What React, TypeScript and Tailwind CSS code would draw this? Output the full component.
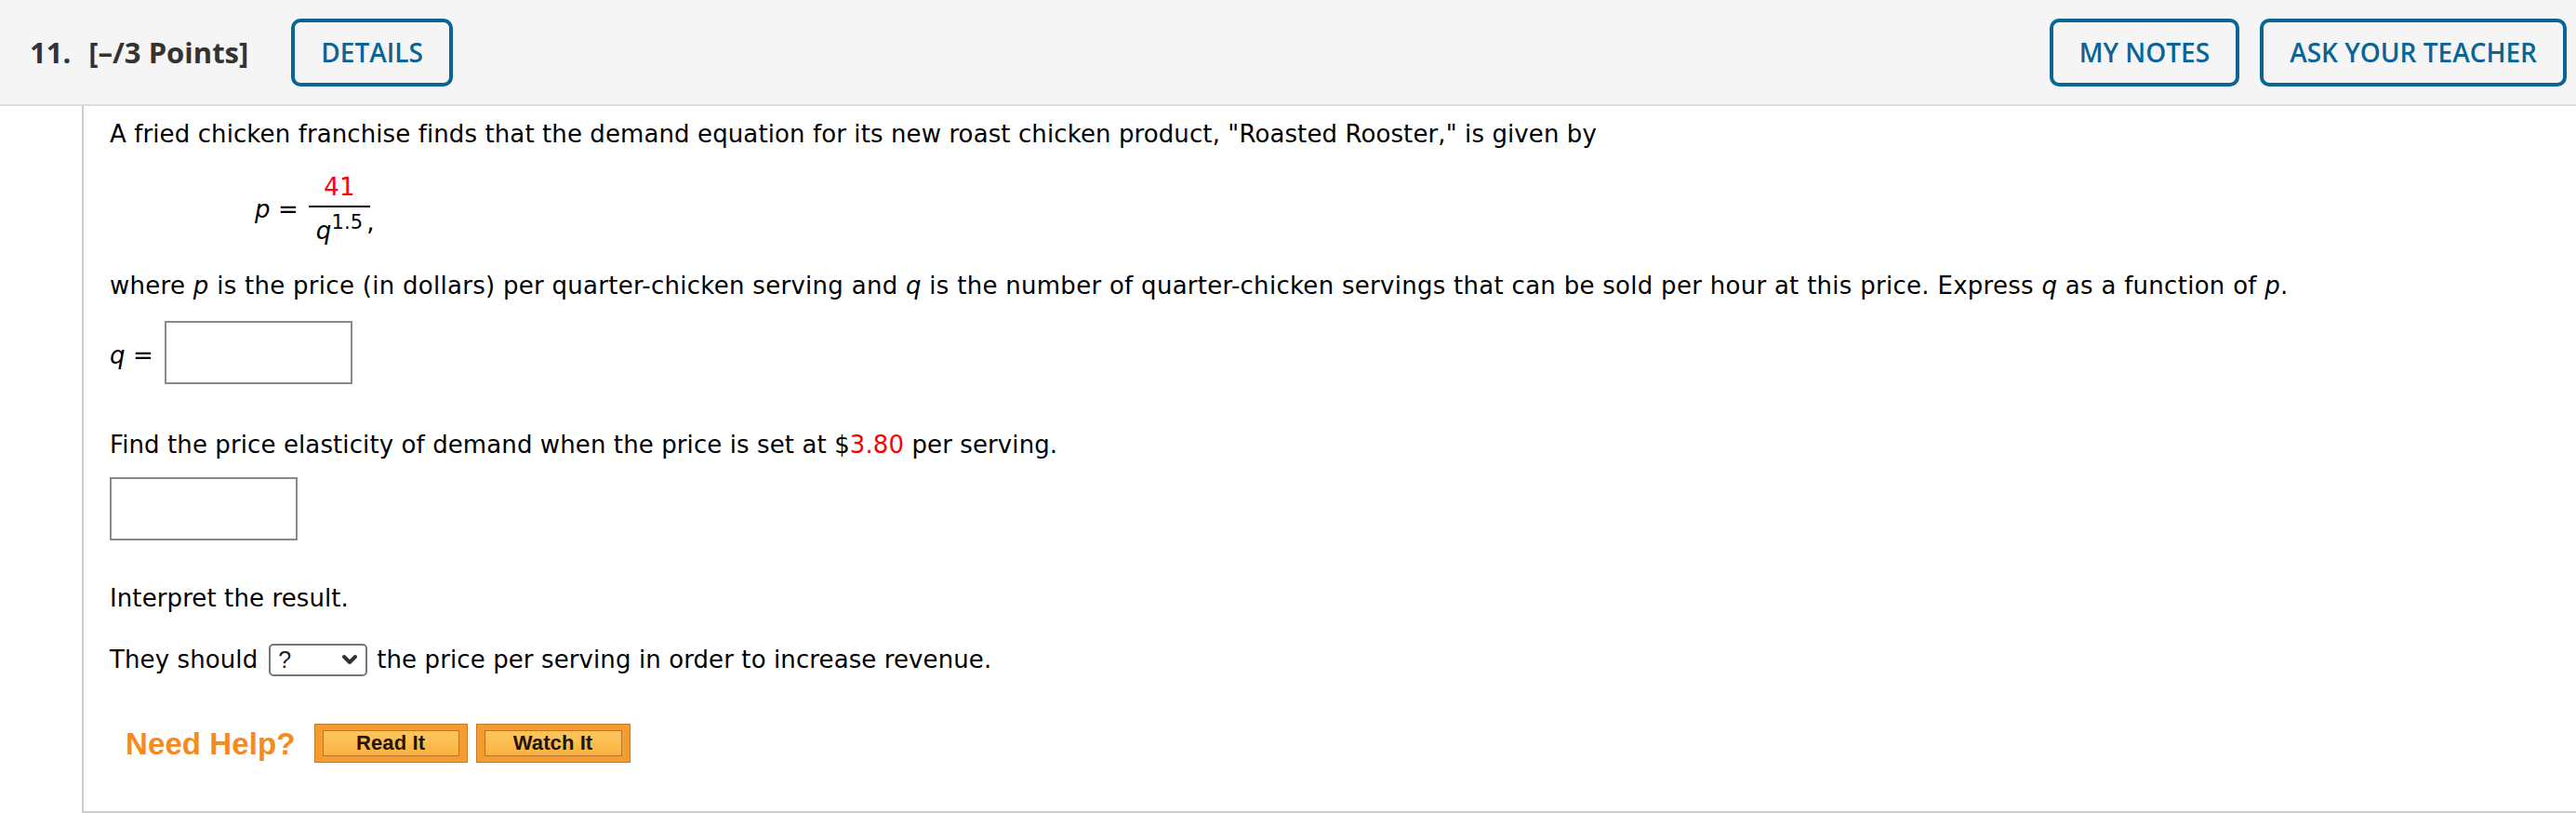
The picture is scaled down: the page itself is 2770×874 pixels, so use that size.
import { ChevronDown } from "lucide-react";

function OutlineButton({ label }: { label: string }) {
  return (
    <button className="h-[73px] rounded-[10px] border-4 border-[#0a6496] bg-transparent px-[28px] font-['Open_Sans'] text-[28px] font-semibold text-[#0a6496]">
      {label}
    </button>
  );
}

function HelpButton({ label, width }: { label: string; width: string }) {
  return (
    <div className={`flex h-[42px] ${width} border border-[#c8772c] bg-[#f59c30] px-[8px] py-[6px]`}>
      <div className="flex flex-1 items-center justify-center border border-[#b77532] bg-gradient-to-b from-[#ffc65e] to-[#fbb240] font-['Liberation_Sans'] text-[22px] font-bold text-[#1e1508]">
        {label}
      </div>
    </div>
  );
}

function AnswerBox({ className = "" }: { className?: string }) {
  return <div className={`h-[68px] w-[202px] border-2 border-[#8a8a8a] bg-white ${className}`} />;
}

export default function App() {
  return (
    <div className="h-[874px] w-[2770px] overflow-hidden bg-white">
      <header className="flex h-[114px] items-center border-b-2 border-[#dcdcdc] bg-[#f5f5f5] pl-[32px] pr-[10px]">
        <span className="font-['Open_Sans'] text-[31px] font-bold text-[#333333]">11.</span>
        <span className="ml-[19px] font-['Open_Sans'] text-[31px] font-bold text-[#333333]">[–/3 Points]</span>
        <div className="ml-[46px]">
          <OutlineButton label="DETAILS" />
        </div>
        <div className="ml-auto flex gap-[22px]">
          <OutlineButton label="MY NOTES" />
          <OutlineButton label="ASK YOUR TEACHER" />
        </div>
      </header>

      <div className="ml-[88px] h-[760px] border-b-2 border-l-2 border-[#cccccc] pl-[28px] pt-[12px] font-['DejaVu_Sans'] text-[26px] leading-[36px] tracking-[0.1px] text-black">
        <p>
          A fried chicken franchise finds that the demand equation for its new roast chicken product, "Roasted Rooster," is given by
        </p>

        <div className="ml-[156px] mt-[24px] flex items-center">
          <span>
            <i>p</i> =
          </span>
          <div className="ml-[11px] flex flex-col items-center">
            <div className="pb-[5px] leading-[30px] text-[#ff0000]">41</div>
            <div className="flex flex-col items-center border-t-2 border-black px-[8px] pt-[6px] leading-[30px]">
              <span>
                <i>q</i>
                <span className="align-[11px] text-[21px] leading-none">1.5</span>
              </span>
            </div>
          </div>
          <span className="-ml-[4px] mt-[28px]">,</span>
        </div>

        <p className="mt-[26px] tracking-[0.28px]">
          where <i>p</i> is the price (in dollars) per quarter-chicken serving and <i>q</i> is the number of quarter-chicken servings that can be sold per hour at this price. Express <i>q</i> as a function of <i>p</i>.
        </p>

        <div className="mt-[20px] flex items-center">
          <span className="pt-[6px]">
            <i>q</i> =
          </span>
          <AnswerBox className="ml-[12px]" />
        </div>

        <p className="mt-[47px]">
          Find the price elasticity of demand when the price is set at $<span className="text-[#ff0000]">3.80</span> per serving.
        </p>

        <AnswerBox className="mt-[17px]" />

        <p className="mt-[44px]">Interpret the result.</p>

        <div className="mt-[30px] flex items-center">
          <span>They should</span>
          <div className="ml-[12px] mr-[10px] flex h-[35px] w-[106px] items-center justify-between rounded-[5px] border-2 border-[#767676] bg-white pl-[8px] pr-[5px]">
            <span className="font-['Liberation_Sans'] text-[25px] leading-none text-[#222222]">?</span>
            <ChevronDown size={24} strokeWidth={4} className="text-[#333333]" />
          </div>
          <span>the price per serving in order to increase revenue.</span>
        </div>

        <div className="ml-[17px] mt-[51px] flex items-center">
          <span className="font-['Liberation_Sans'] text-[33px] font-bold leading-none text-[#f58a1f]">Need Help?</span>
          <div className="ml-[20px] flex gap-[9px]">
            <HelpButton label="Read It" width="w-[165px]" />
            <HelpButton label="Watch It" width="w-[166px]" />
          </div>
        </div>
      </div>
    </div>
  );
}
